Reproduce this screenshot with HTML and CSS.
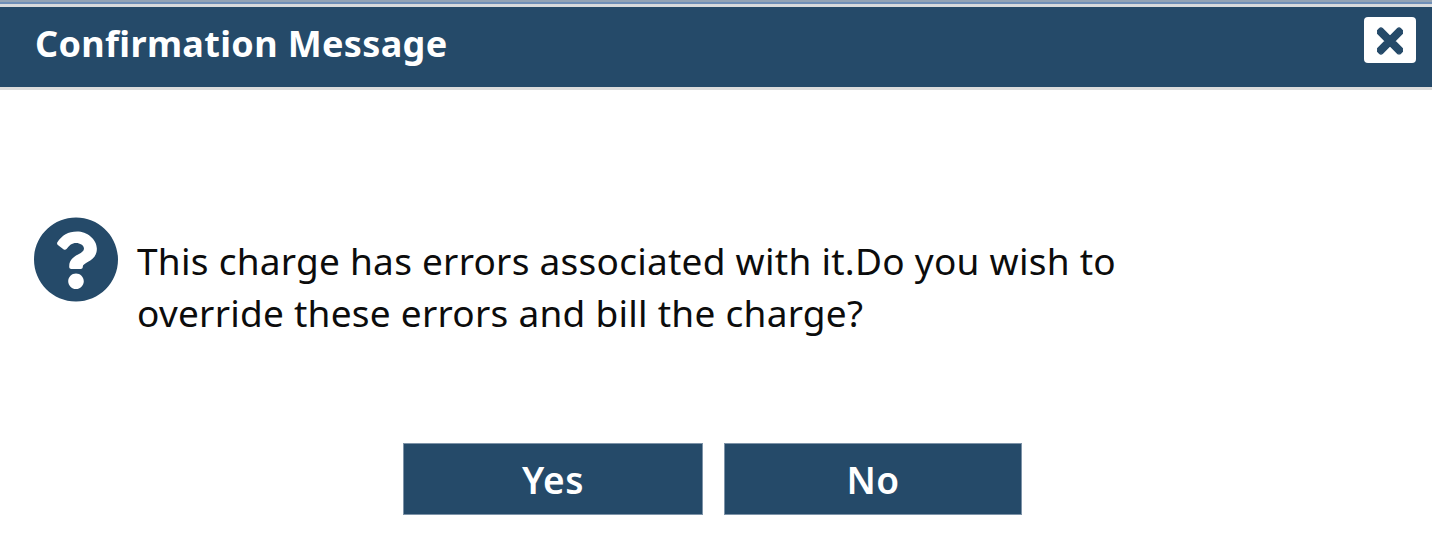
FILE: index.html
```html
<!DOCTYPE html>
<html lang="en">
<head>
    <meta charset="UTF-8">
    <meta name="viewport" content="width=device-width, initial-scale=1.0">
    <title>Confirmation Message</title>
    <link rel="stylesheet" href="styles.css">
</head>
<body>
    <div class="top-line"></div>
    <div class="dialog-header">
        <h1>Confirmation Message</h1>
        <button class="close-btn" type="button" aria-label="Close">
            <svg viewBox="0 0 352 512" width="26" height="38">
                <path fill="#254a69" stroke="#254a69" stroke-width="16" d="M242.72 256l100.07-100.07c12.28-12.28 12.28-32.19 0-44.48l-22.24-22.24c-12.28-12.28-32.19-12.28-44.48 0L176 189.28 75.93 89.21c-12.28-12.28-32.19-12.28-44.48 0L9.21 111.45c-12.28 12.28-12.28 32.19 0 44.48L109.28 256 9.21 356.07c-12.28 12.28-12.28 32.19 0 44.48l22.24 22.24c12.28 12.28 32.2 12.28 44.48 0L176 322.72l100.07 100.07c12.28 12.28 32.2 12.28 44.48 0l22.24-22.24c12.28-12.28 12.28-32.19 0-44.48L242.72 256z"/>
            </svg>
        </button>
    </div>

    <div class="message">
        <svg class="question-icon" viewBox="8 8 496 496" width="84" height="85">
            <path fill="#254a69" d="M504 256c0 136.997-111.043 248-248 248S8 392.997 8 256C8 119.083 119.043 8 256 8s248 111.083 248 248zM262.655 90c-54.497 0-89.255 22.957-116.549 63.758-3.536 5.286-2.353 12.415 2.715 16.258l34.699 26.31c5.205 3.947 12.621 3.008 16.665-2.122 17.864-22.658 30.113-35.797 57.303-35.797 20.429 0 45.698 13.148 45.698 32.958 0 14.976-12.363 22.667-32.534 33.976C247.128 238.528 216 254.941 216 296v4c0 6.627 5.373 12 12 12h56c6.627 0 12-5.373 12-12v-1.333c0-28.462 83.186-29.647 83.186-106.667 0-58.002-60.165-102-116.531-102zM256 338c-25.365 0-46 20.635-46 46 0 25.364 20.635 46 46 46s46-20.636 46-46c0-25.365-20.635-46-46-46z"/>
        </svg>
        <p>This charge has errors associated with it.Do you wish to override these errors and bill the charge?</p>
    </div>

    <div class="actions">
        <button class="action-btn yes" type="button">Yes</button>
        <button class="action-btn" type="button">No</button>
    </div>
</body>
</html>
```

FILE: styles.css
```css
html, body { height: 100%; }
body { margin: 0; background: #fff; font-family: "Noto Sans", Arial, sans-serif; overflow: hidden; }
.top-line { height: 2px; background: #6f8fb8; border-top: 2px solid #93a3b5; border-bottom: 3px solid #d9dbdd; }
.dialog-header { height: 80px; background: #254a69; border-bottom: 3px solid #dcdcdc; display: flex; align-items: center; justify-content: space-between; padding: 0 16px 0 35px; }
.dialog-header h1 { margin: 0 0 8px; color: #fff; font-size: 36px; font-weight: 700; letter-spacing: 0.35px; }
.close-btn { width: 52px; height: 46px; margin-bottom: 14px; padding: 2px 0 0; border: none; border-radius: 4px; background: #fff; display: flex; align-items: center; justify-content: center; }
.message { display: flex; align-items: flex-start; gap: 19px; padding: 127px 0 0 34px; }
.question-icon { flex: none; }
.message p { margin: 18px 0 0; width: 1000px; font-size: 37px; letter-spacing: 0.26px; line-height: 52px; color: #0c0c0c; }
.actions { display: flex; gap: 21px; margin: 104px 0 0 403px; }
.action-btn { width: 298px; height: 72px; border: 1px solid #7d93a8; background: #254a69; color: #fff; font-family: "Noto Sans", Arial, sans-serif; font-size: 37px; font-weight: 600; letter-spacing: 0.5px; }
.action-btn.yes { width: 300px; }
```
